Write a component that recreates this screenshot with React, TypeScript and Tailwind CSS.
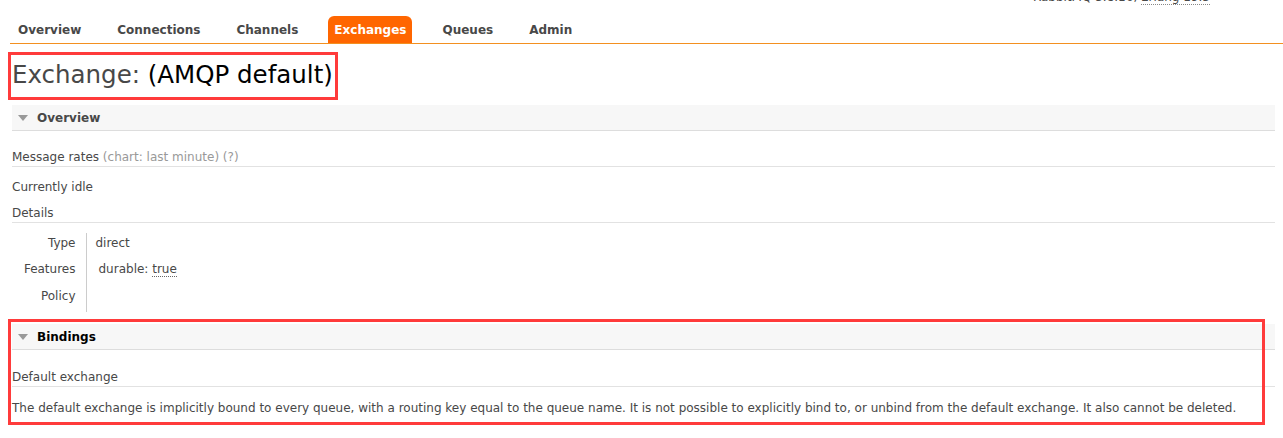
import React from 'react'

const font = { fontFamily: '"DejaVu Sans", Verdana, sans-serif' }

const tabs = ['Overview', 'Connections', 'Channels', 'Exchanges', 'Queues', 'Admin']

function SectionHeader({ title, dark }: { title: string; dark?: boolean }) {
  return (
    <div className="flex items-center h-[26px] bg-[#f7f7f7] border-b border-[#dddddd]">
      <span className="ml-[6px] mr-[9px] w-0 h-0 border-l-[5px] border-r-[5px] border-t-[6px] border-l-transparent border-r-transparent border-t-[#999999]" />
      <span className={`font-bold text-[12px] ${dark ? 'text-black' : 'text-[#484848]'}`}>{title}</span>
    </div>
  )
}

export default function App() {
  return (
    <div className="w-[1283px] h-[438px] overflow-hidden bg-white text-[12px] text-[#484848]" style={font}>
      <div className="h-[16px] flex justify-end pr-[73px]">
        <span className="-mt-[11px] leading-[16px]">
          RabbitMQ 3.8.16, <span className="border-b border-dotted border-[#888]">Erlang 19.3</span>
        </span>
      </div>

      <ul className="ml-[10px] pl-[2px] flex items-end h-[28px] border-b border-[#f39020]">
        {tabs.map(t => (
          <li key={t}
            className={`h-[27px] flex items-center px-[6px] mr-[24px] font-bold text-[12px] rounded-t-[6px] ${
              t === 'Exchanges' ? 'bg-[#ff6600] text-white' : 'text-[#484848]'
            }`}>
            {t}
          </li>
        ))}
      </ul>

      <div className="ml-[8px] mt-[8px] inline-block border-[3px] border-[#ff3b3b] pl-[1px] pr-[2px] h-[48px]">
        <h1 className="text-[24.5px] leading-[40px] font-normal">
          <span className="text-[#484848]">Exchange:</span> <span className="text-black">(AMQP default)</span>
        </h1>
      </div>

      <div className="ml-[12px] mr-[8px] mt-[5px]">
        <SectionHeader title="Overview" />

        <div className="mt-[16px] h-[20px] leading-[20px] border-b border-[#e2e2e2]">
          Message rates <span className="text-[#999999]">(chart: last minute) (?)</span>
        </div>
        <div className="h-[26px] pt-[10px] leading-[20px]">Currently idle</div>
        <div className="mt-[10px] h-[20px] leading-[20px] border-b border-[#e2e2e2]">Details</div>

        <table className="mt-[10px] border-collapse">
          <tbody>
            <tr>
              <th className="w-[74px] pr-[10px] text-right font-normal h-[21px] align-top pt-[1px]">Type</th>
              <td className="border-l border-[#cccccc] pl-[9px] align-top pt-[1px]">direct</td>
            </tr>
            <tr>
              <th className="pr-[10px] text-right font-normal h-[28px] pt-[1px]">Features</th>
              <td className="border-l border-[#cccccc] pl-[12px] pt-[1px]">
                durable: <span className="border-b border-dotted border-[#666]">true</span>
              </td>
            </tr>
            <tr>
              <th className="pr-[10px] text-right font-normal h-[30px] align-top pt-[5px]">Policy</th>
              <td className="border-l border-[#cccccc]"></td>
            </tr>
          </tbody>
        </table>

        <div className="relative mt-[12px]">
          <div className="absolute -left-[4px] right-[10px] -top-[5px] h-[106px] border-[3px] border-[#ff3b3b] pointer-events-none" />
          <SectionHeader title="Bindings" dark />
          <div className="mt-[17px] h-[20px] leading-[20px] border-b border-[#e2e2e2]">Default exchange</div>
          <p className="mt-[11px] leading-[20px]">
            The default exchange is implicitly bound to every queue, with a routing key equal to the queue name. It is not possible to explicitly bind to, or unbind from the default exchange. It also cannot be deleted.
          </p>
        </div>
      </div>
    </div>
  )
}
